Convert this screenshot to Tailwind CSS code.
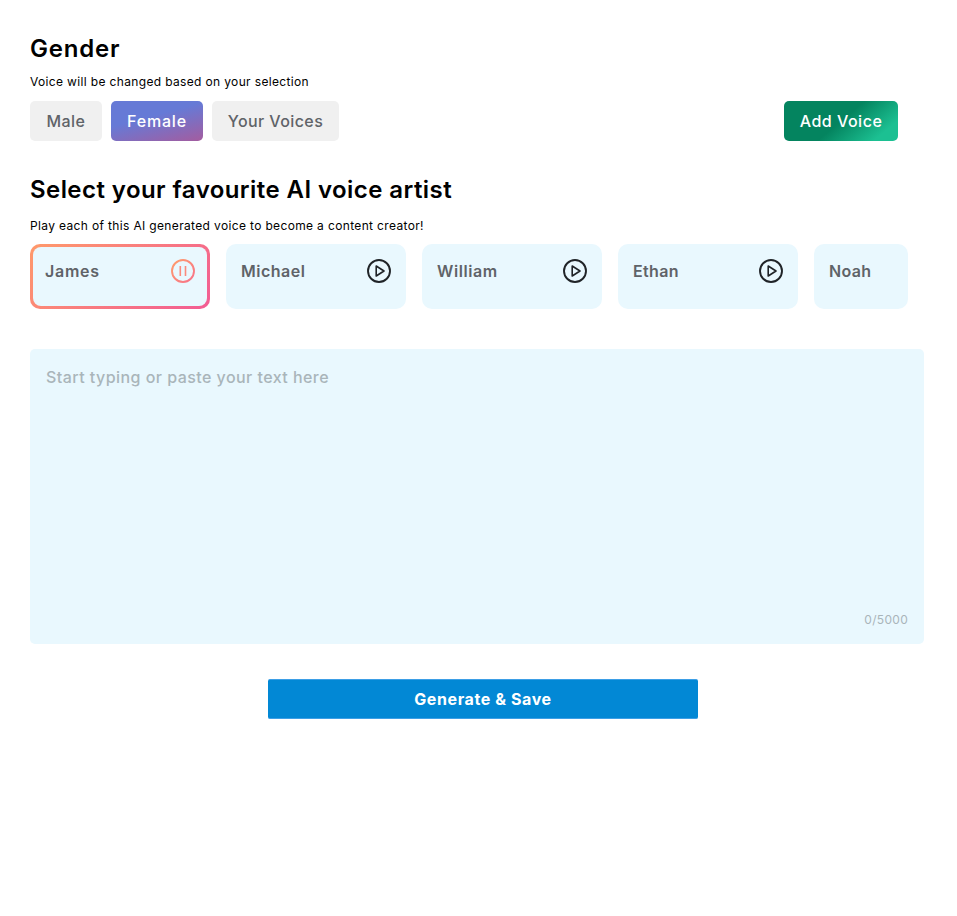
<!DOCTYPE html>
<html><head><meta charset="utf-8"><script src="https://cdn.jsdelivr.net/npm/@tailwindcss/browser@4"></script></head>
<body class="bg-white font-['Inter',sans-serif] w-[957px] h-[916px] overflow-hidden">
<main class="pl-[30px] pt-[34px] w-[924px]">
  <h1 class="text-[24px] leading-[30px] font-semibold text-black tracking-[0.8px]">Gender</h1>
  <p class="text-[12px] leading-[18px] text-black mt-[9px] tracking-[0.35px]">Voice will be changed based on your selection</p>
  <div class="flex items-center gap-[9px] mt-[10px] w-[868px]">
    <button class="w-[72px] h-10 rounded-[5px] bg-[#f0f0f0] text-[#5f6368] text-[16px] font-medium tracking-[0.45px]">Male</button>
    <button class="w-[92px] h-10 rounded-[5px] bg-[linear-gradient(165deg,#667ad6_40%,#a45c9f_100%)] text-white text-[16px] font-medium tracking-[0.8px]">Female</button>
    <button class="w-[127px] h-10 rounded-[5px] bg-[#f0f0f0] text-[#5f6368] text-[16px] font-medium tracking-[0.4px]">Your Voices</button>
    <button class="ml-auto w-[114px] h-10 rounded-[5px] bg-[linear-gradient(140deg,#04845f_50%,#1cc092_85%)] text-white text-[16px] font-medium tracking-[0.5px]">Add Voice</button>
  </div>
  <h2 class="text-[24px] leading-[30px] font-semibold text-black mt-[34px] tracking-[0.43px]">Select your favourite AI voice artist</h2>
  <p class="text-[12px] leading-[18px] text-black mt-[12px] tracking-[0.35px]">Play each of this AI generated voice to become a content creator!</p>
  <div class="flex gap-4 mt-[9px] h-[65px]">
    <div class="w-[180px] rounded-[10px] p-[3px] bg-[linear-gradient(135deg,#ff9a6b_0%,#f25c94_100%)]">
      <div class="h-full rounded-[8px] bg-[#e9f8fe] flex items-start justify-between pl-3 pr-[12px] pt-[12px]">
        <span class="text-[16px] leading-[24px] font-semibold text-[#5f6368] tracking-[0.75px]">James</span>
        <svg class="w-6 h-6" viewBox="0 0 24 24" fill="none"><defs><linearGradient id="g" x1="0" y1="0" x2="1" y2="1"><stop offset="0" stop-color="#ff9d6c"/><stop offset="1" stop-color="#f7728a"/></linearGradient></defs><circle cx="12" cy="12" r="11" stroke="url(#g)" stroke-width="1.9"/><path d="M9.3 7v10M14.5 7v10" stroke="#fb8a7c" stroke-width="1.6"/></svg>
      </div>
    </div>
    <div class="w-[180px] rounded-[10px] bg-[#e9f8fe] flex items-start justify-between pl-[15px] pr-[15px] pt-[15px]">
      <span class="text-[16px] leading-[24px] font-semibold text-[#5f6368] tracking-[0.5px]">Michael</span>
      <svg class="w-6 h-6" viewBox="0 0 24 24" fill="none" stroke="#202428" stroke-width="1.9"><circle cx="12" cy="12" r="11"/><path d="M9.2 7 17 12l-7.8 5z" stroke-width="1.6" stroke-linejoin="round"/></svg>
    </div>
    <div class="w-[180px] rounded-[10px] bg-[#e9f8fe] flex items-start justify-between pl-[15px] pr-[15px] pt-[15px]">
      <span class="text-[16px] leading-[24px] font-semibold text-[#5f6368] tracking-[0.6px]">William</span>
      <svg class="w-6 h-6" viewBox="0 0 24 24" fill="none" stroke="#202428" stroke-width="1.9"><circle cx="12" cy="12" r="11"/><path d="M9.2 7 17 12l-7.8 5z" stroke-width="1.6" stroke-linejoin="round"/></svg>
    </div>
    <div class="w-[180px] rounded-[10px] bg-[#e9f8fe] flex items-start justify-between pl-[15px] pr-[15px] pt-[15px]">
      <span class="text-[16px] leading-[24px] font-semibold text-[#5f6368] tracking-[0.35px]">Ethan</span>
      <svg class="w-6 h-6" viewBox="0 0 24 24" fill="none" stroke="#202428" stroke-width="1.9"><circle cx="12" cy="12" r="11"/><path d="M9.2 7 17 12l-7.8 5z" stroke-width="1.6" stroke-linejoin="round"/></svg>
    </div>
    <div class="w-[94px] rounded-[10px] bg-[#e9f8fe] pl-[15px] pt-[15px]">
      <span class="block text-[16px] leading-[24px] font-semibold text-[#5f6368] tracking-[0.3px]">Noah</span>
    </div>
  </div>
  <div class="mt-10 w-[894px] h-[295px] rounded-[5px] bg-[#e9f8fe] px-4 pt-[16px] pb-[15px] flex flex-col justify-between">
    <p class="text-[16px] leading-6 font-medium text-[#a9b5ba] tracking-[0.45px]">Start typing or paste your text here</p>
    <p class="text-[12px] leading-[18px] text-[#a9b5ba] text-right tracking-[0.3px]">0/5000</p>
  </div>
  <div class="mt-[35px] w-[906px] flex justify-center">
    <button class="w-[430px] h-10 rounded-[2px] bg-[#0288d5] border-y border-[#3d9fe6] text-white text-[16px] font-bold tracking-[0.6px]">Generate &amp; Save</button>
  </div>
</main>
</body></html>
